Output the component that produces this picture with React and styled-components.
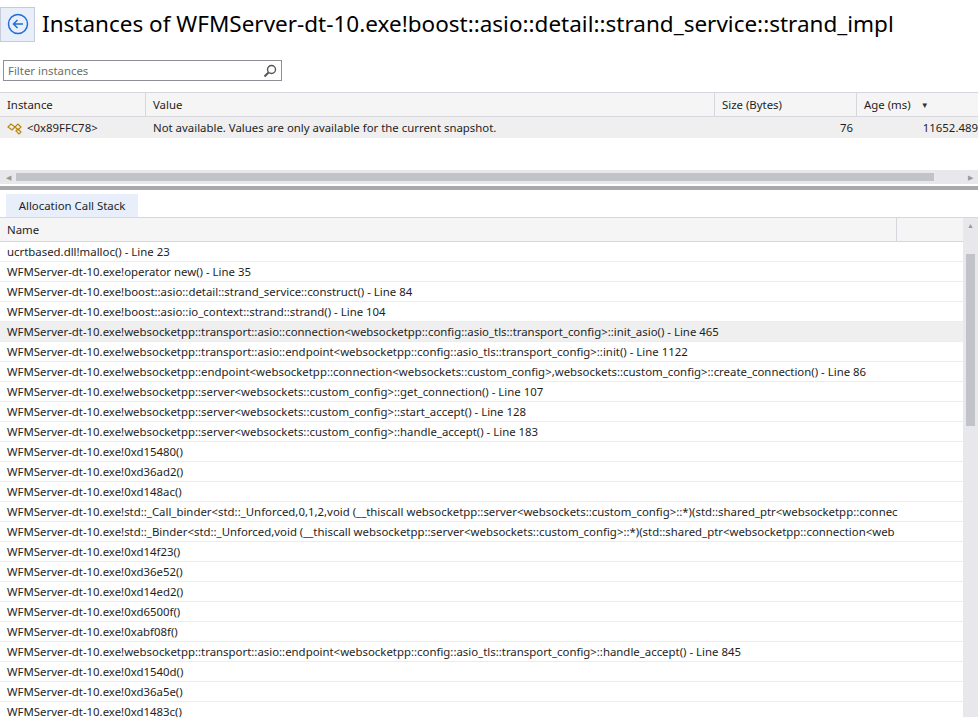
import React from "react";
import styled, { createGlobalStyle } from "styled-components";

const Global = createGlobalStyle`
  html, body { margin: 0; background: #fff; }
  body { font-family: "Noto Sans", "Segoe UI", sans-serif; font-size: 11.4px; color: #1e1e1e; overflow: hidden; }
`;

const frames = [
  "ucrtbased.dll!malloc() - Line 23",
  "WFMServer-dt-10.exe!operator new() - Line 35",
  "WFMServer-dt-10.exe!boost::asio::detail::strand_service::construct() - Line 84",
  "WFMServer-dt-10.exe!boost::asio::io_context::strand::strand() - Line 104",
  "WFMServer-dt-10.exe!websocketpp::transport::asio::connection<websocketpp::config::asio_tls::transport_config>::init_asio() - Line 465",
  "WFMServer-dt-10.exe!websocketpp::transport::asio::endpoint<websocketpp::config::asio_tls::transport_config>::init() - Line 1122",
  "WFMServer-dt-10.exe!websocketpp::endpoint<websocketpp::connection<websockets::custom_config>,websockets::custom_config>::create_connection() - Line 86",
  "WFMServer-dt-10.exe!websocketpp::server<websockets::custom_config>::get_connection() - Line 107",
  "WFMServer-dt-10.exe!websocketpp::server<websockets::custom_config>::start_accept() - Line 128",
  "WFMServer-dt-10.exe!websocketpp::server<websockets::custom_config>::handle_accept() - Line 183",
  "WFMServer-dt-10.exe!0xd15480()",
  "WFMServer-dt-10.exe!0xd36ad2()",
  "WFMServer-dt-10.exe!0xd148ac()",
  "WFMServer-dt-10.exe!std::_Call_binder<std::_Unforced,0,1,2,void (__thiscall websocketpp::server<websockets::custom_config>::*)(std::shared_ptr<websocketpp::connec",
  "WFMServer-dt-10.exe!std::_Binder<std::_Unforced,void (__thiscall websocketpp::server<websockets::custom_config>::*)(std::shared_ptr<websocketpp::connection<web",
  "WFMServer-dt-10.exe!0xd14f23()",
  "WFMServer-dt-10.exe!0xd36e52()",
  "WFMServer-dt-10.exe!0xd14ed2()",
  "WFMServer-dt-10.exe!0xd6500f()",
  "WFMServer-dt-10.exe!0xabf08f()",
  "WFMServer-dt-10.exe!websocketpp::transport::asio::endpoint<websocketpp::config::asio_tls::transport_config>::handle_accept() - Line 845",
  "WFMServer-dt-10.exe!0xd1540d()",
  "WFMServer-dt-10.exe!0xd36a5e()",
  "WFMServer-dt-10.exe!0xd1483c()",
];

export default function App() {
  return (
    <Page>
      <Global />
      <TitleBar>
        <BackButton>
          <svg width="22" height="22" viewBox="0 0 22 22">
            <circle cx="11" cy="11" r="9.5" fill="none" stroke="#1e6fd0" strokeWidth="1.5" />
            <path d="M16 11H6.5M10.5 7l-4 4 4 4" fill="none" stroke="#1e6fd0" strokeWidth="1.5" />
          </svg>
        </BackButton>
        <Title>Instances of WFMServer-dt-10.exe!boost::asio::detail::strand_service::strand_impl</Title>
      </TitleBar>
      <Filter>
        <FilterText>Filter instances</FilterText>
        <svg width="14" height="14" viewBox="0 0 14 14">
          <circle cx="8.5" cy="5.5" r="4" fill="none" stroke="#555" strokeWidth="1.4" />
          <path d="M5.5 8.5L1.5 12.5" stroke="#555" strokeWidth="2" />
        </svg>
      </Filter>
      <Grid>
        <HeadRow>
          <HeadCell $w={146}>Instance</HeadCell>
          <HeadCell $w={569}>Value</HeadCell>
          <HeadCell $w={142}>Size (Bytes)</HeadCell>
          <HeadCell $w={121} $last>Age (ms) <Arrow>▼</Arrow></HeadCell>
        </HeadRow>
        <InstRow>
          <Cell $w={146}>
            <svg width="18" height="14" viewBox="0 0 18 14" style={{ marginRight: 2 }}>
              <path d="M1 6l3-3 4 3-3 3z M8 6l3-3 3 3-3 3z M9 10l2-2 3 3-2 2z" fill="none" stroke="#b8860b" strokeWidth="1.2" />
            </svg>
            &lt;0x89FFC78&gt;
          </Cell>
          <Cell $w={569}>Not available. Values are only available for the current snapshot.</Cell>
          <Cell $w={142} $right>76</Cell>
          <Cell $w={121} $right $clip>11652.489</Cell>
        </InstRow>
      </Grid>
      <HScroll>
        <ScrollArrow>◀</ScrollArrow>
        <HThumb />
        <ScrollArrow>▶</ScrollArrow>
      </HScroll>
      <Splitter />
      <Tabs>
        <Tab>Allocation Call Stack</Tab>
      </Tabs>
      <StackArea>
        <StackList>
          <HeadRow>
            <HeadCell $w={897}>Name</HeadCell>
            <HeadCell $w={66} $last />
          </HeadRow>
          {frames.map((f, i) => (
            <StackRow key={i} $sel={i === 4}>{f}</StackRow>
          ))}
        </StackList>
        <VScroll>
          <VArrow>▲</VArrow>
          <VThumb />
        </VScroll>
      </StackArea>
    </Page>
  );
}

const Page = styled.div`
  width: 978px;
  height: 717px;
  overflow: hidden;
`;
const TitleBar = styled.div`
  display: flex;
  align-items: center;
  height: 47px;
`;
const BackButton = styled.div`
  width: 35px;
  height: 35px;
  margin-top: 1px;
  box-sizing: border-box;
  border: 1px solid #c5cbd8;
  background: #e8effa;
  display: flex;
  align-items: center;
  justify-content: center;
  margin-right: 7px;
`;
const Title = styled.div`
  font-size: 22.5px;
  color: #000;
  white-space: nowrap;
`;
const Filter = styled.div`
  margin: 13px 0 0 3px;
  width: 279px;
  height: 21px;
  box-sizing: border-box;
  border: 1px solid #8e8e94;
  display: flex;
  align-items: center;
  justify-content: space-between;
  padding: 0 4px;
`;
const FilterText = styled.span`
  color: #6d6d6d;
`;
const Grid = styled.div`
  margin-top: 11px;
  border-top: 1px solid #d6d6dc;
`;
const HeadRow = styled.div`
  display: flex;
  height: 23px;
  background: #f5f5f5;
  border-bottom: 1px solid #d6d6dc;
`;
const HeadCell = styled.div`
  width: ${(p) => p.$w}px;
  flex: none;
  box-sizing: border-box;
  padding-left: 7px;
  display: flex;
  align-items: center;
  border-right: ${(p) => (p.$last ? "none" : "1px solid #d6d6dc")};
  white-space: nowrap;
`;
const Arrow = styled.span`
  font-size: 8px;
  margin-left: 10px;
  color: #333;
`;
const InstRow = styled.div`
  display: flex;
  height: 21px;
  background: #efefef;
`;
const Cell = styled.div`
  width: ${(p) => p.$w}px;
  flex: none;
  box-sizing: border-box;
  display: flex;
  align-items: center;
  justify-content: ${(p) => (p.$right ? "flex-end" : "flex-start")};
  padding: ${(p) => (p.$right ? (p.$clip ? "0" : "0 4px 0 0") : "0 0 0 7px")};
  white-space: nowrap;
  overflow: hidden;
`;
const HScroll = styled.div`
  margin-top: 32px;
  height: 14px;
  background: #e8e8ec;
  display: flex;
  align-items: center;
`;
const ScrollArrow = styled.div`
  width: 16px;
  font-size: 7px;
  color: #999;
  text-align: center;
  flex: none;
`;
const HThumb = styled.div`
  flex: 1;
  height: 8px;
  background: #c2c3c9;
  margin-right: 28px;
`;
const Splitter = styled.div`
  height: 4px;
  margin-top: 2px;
  background: #a8a8ad;
`;
const Tabs = styled.div`
  display: flex;
  padding: 4px 0 0 6px;
  border-bottom: 1px solid #d6d6dc;
`;
const Tab = styled.div`
  width: 132px;
  height: 23px;
  background: #e8effa;
  display: flex;
  align-items: center;
  justify-content: center;
`;
const StackArea = styled.div`
  display: flex;
`;
const StackList = styled.div`
  flex: 1;
  min-width: 0;
`;
const StackRow = styled.div`
  height: 19px;
  line-height: 19px;
  padding-left: 7px;
  border-bottom: 1px solid #ececec;
  white-space: nowrap;
  overflow: hidden;
  background: ${(p) => (p.$sel ? "#efefef" : "#fff")};
`;
const VScroll = styled.div`
  width: 15px;
  flex: none;
  background: #e8e8ec;
  height: 500px;
  display: flex;
  flex-direction: column;
  align-items: center;
`;
const VArrow = styled.div`
  font-size: 7px;
  color: #999;
  height: 14px;
  line-height: 16px;
`;
const VThumb = styled.div`
  width: 9px;
  height: 172px;
  margin-top: 22px;
  background: #c2c3c9;
`;
